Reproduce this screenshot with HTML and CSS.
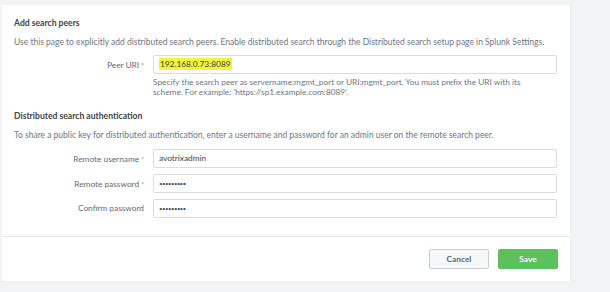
FILE: index.html
```html
<!DOCTYPE html>
<html>
<head>
<meta charset="utf-8">
<link rel="stylesheet" href="styles.css">
</head>
<body>
<div class="card">
  <div class="body">
    <h2 class="title">Add search peers</h2>
    <p class="desc">Use this page to explicitly add distributed search peers. Enable distributed search through the Distributed search setup page in Splunk Settings.</p>
    <div class="row">
      <label class="label">Peer URI <span class="req">*</span></label>
      <div class="field">
        <div class="input"><span class="hl">192.168.0.73:8089</span></div>
        <div class="help">Specify the search peer as servername:mgmt_port or URI:mgmt_port. You must prefix the URI with its scheme. For example: 'https://sp1.example.com:8089'.</div>
      </div>
    </div>
    <h2 class="title title2">Distributed search authentication</h2>
    <p class="desc">To share a public key for distributed authentication, enter a username and password for an admin user on the remote search peer.</p>
    <div class="row row-tight">
      <label class="label">Remote username <span class="req">*</span></label>
      <div class="field"><div class="input">avotrixadmin</div></div>
    </div>
    <div class="row row-tight">
      <label class="label">Remote password <span class="req">*</span></label>
      <div class="field"><div class="input dots">•••••••••</div></div>
    </div>
    <div class="row row-tight">
      <label class="label">Confirm password</label>
      <div class="field"><div class="input dots">•••••••••</div></div>
    </div>
  </div>
  <div class="footer">
    <button class="btn cancel">Cancel</button>
    <button class="btn save">Save</button>
  </div>
</div>
</body>
</html>
```
FILE: styles.css
```css
html, body {
  margin: 0;
  padding: 0;
  background: #f2f3f5;
  font-family: Lato, "Open Sans", "Liberation Sans", sans-serif;
}
body {
  padding: 5px 0 0 2px;
}
.card {
  width: 569px;
  height: 276px;
  background: #fff;
  display: flex;
  flex-direction: column;
  box-sizing: border-box;
  border-right: 1px solid #eceef1;
}
.body {
  padding: 12px 0 0 12px;
  height: 232px;
  box-sizing: border-box;
  border-bottom: 1px solid #e6e8eb;
}
.title {
  margin: 0;
  font-size: 8.6px;
  font-weight: 700;
  color: #3c444d;
  line-height: 12px;
}
.title2 {
  margin-top: 13px;
}
.desc {
  margin: 7px 0 0 0;
  font-size: 8.5px;
  color: #6b7785;
  line-height: 12px;
  white-space: nowrap;
}
.row {
  display: flex;
  margin-top: 7px;
}
.row-tight {
  margin-top: 5px;
}
.desc + .row-tight {
  margin-top: 8px;
}
.label {
  width: 136px;
  text-align: right;
  font-size: 8.3px;
  color: #5f6a76;
  line-height: 19px;
  padding-right: 6px;
  box-sizing: border-box;
}
.req {
  font-size: 6.5px;
  vertical-align: 1px;
}
.field {
  width: 404px;
  margin-left: 3px;
}
.input {
  height: 19px;
  box-sizing: border-box;
  border: 1px solid #d8dde2;
  border-radius: 2px;
  font-size: 8.3px;
  color: #3c444d;
  line-height: 17px;
  padding-left: 5px;
}
.dots {
  font-size: 6px;
  letter-spacing: -0.5px;
  color: #4a525b;
}
.hl {
  background: #f4f43a;
  padding: 1px 1px;
}
.help {
  margin-top: 4px;
  font-size: 8.3px;
  line-height: 9.5px;
  color: #6b7785;
  padding-right: 14px;
}
.footer {
  flex: 1;
  display: flex;
  justify-content: flex-end;
  align-items: flex-start;
  padding: 12px 12px 0 0;
  gap: 9px;
}
.btn {
  width: 60px;
  height: 20px;
  border-radius: 2px;
  font-family: Lato, "Open Sans", "Liberation Sans", sans-serif;
  font-size: 8.3px;
  font-weight: 700;
  padding: 0;
}
.cancel {
  background: #f6f7f9;
  border: 1px solid #c8ced6;
  color: #5c6773;
}
.save {
  background: #5cc05c;
  border: 1px solid #5cc05c;
  color: #fff;
}
```
